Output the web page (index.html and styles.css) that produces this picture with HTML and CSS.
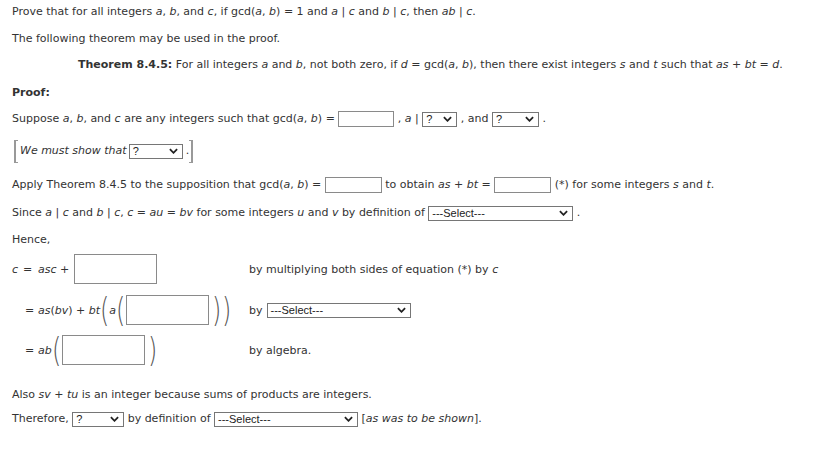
FILE: index.html
```html
<!DOCTYPE html>
<html>
<head>
<meta charset="utf-8">
<link rel="stylesheet" href="styles.css">
</head>
<body>
<div class="page">
  <p class="l1">Prove that for all integers <i>a</i>, <i>b</i>, and <i>c</i>, if gcd(<i>a</i>, <i>b</i>) = 1 and <i>a</i> | <i>c</i> and <i>b</i> | <i>c</i>, then <i>ab</i> | <i>c</i>.</p>
  <p class="l2">The following theorem may be used in the proof.</p>
  <p class="thm"><b>Theorem 8.4.5:</b> For all integers <i>a</i> and <i>b</i>, not both zero, if <i>d</i> = gcd(<i>a</i>, <i>b</i>), then there exist integers <i>s</i> and <i>t</i> such that <i>as</i> + <i>bt</i> = <i>d</i>.</p>
  <p class="proof"><b>Proof:</b></p>
  <p class="sup">Suppose <i>a</i>, <i>b</i>, and <i>c</i> are any integers such that gcd(<i>a</i>, <i>b</i>) = <span class="inp w56"></span> , <i>a</i> | <span class="sel w35">?<svg class="chev" viewBox="0 0 10 6"><path d="M1 1 L5 5 L9 1"/></svg></span> , and <span class="sel w47">?<svg class="chev" viewBox="0 0 10 6"><path d="M1 1 L5 5 L9 1"/></svg></span> .</p>
  <p class="must"><span class="brk brk-l"></span><i>We must show that</i> <span class="sel w54">?<svg class="chev" viewBox="0 0 10 6"><path d="M1 1 L5 5 L9 1"/></svg></span> .<span class="brk brk-r"></span></p>
  <p class="apply">Apply Theorem 8.4.5 to the supposition that gcd(<i>a</i>, <i>b</i>) = <span class="inp w57"></span> to obtain <i>as</i> + <i>bt</i> = <span class="inp w57"></span> (*) for some integers <i>s</i> and <i>t</i>.</p>
  <p class="since">Since <i>a</i> | <i>c</i> and <i>b</i> | <i>c</i>, <i>c</i> = <i>au</i> = <i>bv</i> for some integers <i>u</i> and <i>v</i> by definition of <span class="sel w145">---Select---<svg class="chev" viewBox="0 0 10 6"><path d="M1 1 L5 5 L9 1"/></svg></span> .</p>
  <p class="hence">Hence,</p>
  <div class="eqs">
    <div class="eq r1">
      <span class="lhs lhs-c"><i>c</i></span><span class="eqs-sign sign-c">=</span>
      <span class="rhs"><i>asc</i>&nbsp;+&nbsp;<span class="box first"></span></span>
    </div>
    <div class="why r1"><span>by multiplying both sides of equation (*) by <i>c</i></span></div>
    <div class="eq r2">
      <span class="lhs"></span><span class="eqs-sign">=</span>
      <span class="rhs"><i>as</i>(<i>bv</i>)&nbsp;+&nbsp;<i>bt</i><span class="paren">(</span><i>a</i><span class="paren">(</span><span class="box gap"></span><span class="paren">)</span><span class="paren">)</span></span>
    </div>
    <div class="why r2"><span>by</span><span class="sel w144">---Select---<svg class="chev" viewBox="0 0 10 6"><path d="M1 1 L5 5 L9 1"/></svg></span></div>
    <div class="eq r3">
      <span class="lhs"></span><span class="eqs-sign">=</span>
      <span class="rhs"><i>ab</i><span class="paren">(</span><span class="box gap"></span><span class="paren">)</span></span>
    </div>
    <div class="why r3"><span>by algebra.</span></div>
  </div>
  <p class="also">Also <i>sv</i> + <i>tu</i> is an integer because sums of products are integers.</p>
  <p class="there">Therefore, <span class="sel w52">?<svg class="chev" viewBox="0 0 10 6"><path d="M1 1 L5 5 L9 1"/></svg></span> by definition of <span class="sel w144">---Select---<svg class="chev" viewBox="0 0 10 6"><path d="M1 1 L5 5 L9 1"/></svg></span> [<i>as was to be shown</i>].</p>
</div>
</body>
</html>
```

FILE: styles.css
```css
html, body {
  margin: 0;
  padding: 0;
  background: #fff;
}
.page {
  padding: 4px 12px 0 12px;
  font-family: "DejaVu Sans", Verdana, sans-serif;
  font-size: 11px;
  color: #333;
}
p {
  margin: 0;
  line-height: 16px;
  white-space: nowrap;
}
i { font-style: italic; }
b { font-weight: bold; }
.l2 { margin-top: 11px; }
.thm { margin-top: 10px; padding-left: 66px; }
.proof { margin-top: 12px; }
.sup { margin-top: 10px; }
.must { margin-top: 12px; display: flex; align-items: center; height: 24px; }
.apply { margin-top: 14px; }
.since { margin-top: 12px; }
.hence { margin-top: 11px; }
.also { margin-top: 21px; }
.there { margin-top: 8px; }

.inp {
  display: inline-block;
  box-sizing: border-box;
  height: 16px;
  border: 1px solid #8a8a8a;
  vertical-align: middle;
  background: #fff;
}
.w56 { width: 56px; }
.w57 { width: 57px; }

.sel {
  display: inline-flex;
  align-items: center;
  justify-content: space-between;
  box-sizing: border-box;
  height: 15px;
  border: 1px solid #767676;
  padding: 0 4px 0 3px;
  font-family: "Liberation Sans", Arial, sans-serif;
  font-size: 11px;
  color: #222;
  vertical-align: middle;
  background: #fff;
}
.chev {
  width: 9px;
  height: 6px;
  fill: none;
  stroke: #222;
  stroke-width: 2;
}
.w35 { width: 35px; }
.w47 { width: 47px; }
.w54 { width: 54px; }
.w52 { width: 52px; }
.w144 { width: 144px; }
.w145 { width: 145px; }

.brk {
  display: inline-block;
  width: 4px;
  height: 23px;
  box-sizing: border-box;
  border: 1px solid #999;
}
.brk-l { border-right: none; border-left-width: 2px; margin-right: 2px; margin-left: 2px; }
.brk-r { border-left: none; border-right-width: 2px; margin-left: 0; }
.must .sel { margin: 0 3px 0 2px; }

.eqs {
  display: grid;
  grid-template-columns: 237px 1fr;
  margin-top: 6px;
}
.eq {
  display: flex;
  align-items: center;
}
.why {
  display: flex;
  align-items: center;
  white-space: nowrap;
}
.why .sel { margin-left: 4px; }
.r1 { height: 30px; }
.r2 { height: 32px; margin-top: 10px; }
.r3 { height: 32px; margin-top: 8px; }
.lhs { width: 13px; }
.lhs-c { width: 11px; }
.eqs-sign { width: 13px; }
.sign-c { width: 15px; }
.rhs { display: flex; align-items: center; white-space: nowrap; }
.box {
  display: inline-block;
  box-sizing: border-box;
  width: 83px;
  height: 30px;
  border: 1px solid #8a8a8a;
  background: #fff;
}
.box.first { margin-left: 1px; }
.box.gap { margin: 0 3px 0 1px; }
.paren {
  font-family: "DejaVu Sans ExtraLight", "DejaVu Sans", sans-serif;
  font-weight: 200;
  font-size: 34px;
  line-height: 30px;
  color: #555;
  display: inline-block;
  transform: scaleX(0.7);
  margin: 0 -2px;
}
```
